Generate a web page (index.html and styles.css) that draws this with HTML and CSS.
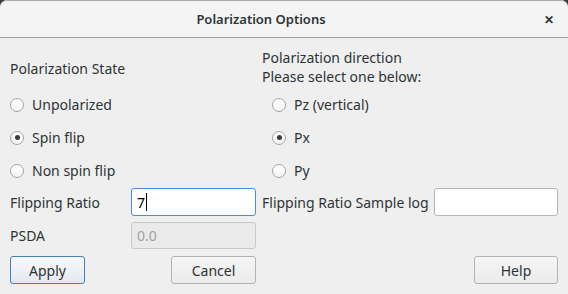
FILE: index.html
```html
<!DOCTYPE html>
<html>
<head>
    <title>Polarization Options</title>
    <link rel="stylesheet" href="styles.css">
</head>
<body>
    <div class="window">
        <div class="titlebar">
            <span class="title">Polarization Options</span>
            <span class="close">&#x2715;</span>
        </div>

        <div class="content">
            <div class="top">
                <div class="col-left">
                    <div class="heading heading-left">Polarization State</div>
                    <label class="radio-row"><span class="radio"></span>Unpolarized</label>
                    <label class="radio-row"><span class="radio checked"></span>Spin flip</label>
                    <label class="radio-row"><span class="radio"></span>Non spin flip</label>
                </div>
                <div class="col-right">
                    <div class="heading heading-right">Polarization direction<br>Please select one below:</div>
                    <label class="radio-row"><span class="radio"></span>Pz (vertical)</label>
                    <label class="radio-row"><span class="radio checked"></span>Px</label>
                    <label class="radio-row"><span class="radio"></span>Py</label>
                </div>
            </div>

            <div class="form">
                <div class="form-row row-ratio">
                    <span class="label">Flipping Ratio</span>
                    <div class="field focused">7<span class="caret"></span></div>
                    <span class="label c3">Flipping Ratio Sample log</span>
                    <div class="field"></div>
                </div>
                <div class="form-row row-psda">
                    <span class="label">PSDA</span>
                    <div class="field disabled">0.0</div>
                </div>
                <div class="form-row row-buttons">
                    <div><button class="btn btn-default apply">Apply</button></div>
                    <div class="right"><button class="btn cancel">Cancel</button></div>
                    <div></div>
                    <div class="right"><button class="btn help">Help</button></div>
                </div>
            </div>
        </div>
    </div>
</body>
</html>
```

FILE: styles.css
```css
html { background: #3c3c3c; }
body { margin: 0; font-family: "Noto Sans", "Open Sans", sans-serif; font-size: 14px; color: #2e3436; }
.window { width: 568px; height: 294px; background: #efefef; border-radius: 7px 7px 0 0; overflow: hidden; }

.titlebar { height: 38px; box-sizing: border-box; padding-right: 46px; background: #f4f4f4; border-top: 1px solid #a9a9a9; border-bottom: 1px solid #9e9e9e; border-radius: 7px 7px 0 0; display: flex; align-items: center; justify-content: center; position: relative; }
.title { font-weight: 600; font-size: 13px; color: #2e3436; }
.close { position: absolute; right: 14px; top: 10px; font-size: 12px; font-weight: bold; color: #2e3436; }

.content { padding: 0 10px; }
.top { display: flex; }
.col-left { width: 252px; }
.col-right { padding-left: 10px; }
.heading { height: 50px; box-sizing: border-box; line-height: 19px; }
.heading-left { padding-top: 21px; }
.heading-right { padding-top: 10px; margin-left: -10px; }

.radio-row { display: flex; align-items: center; height: 33px; }
.radio { width: 12px; height: 12px; border: 1px solid #a4a4a4; border-radius: 50%; background: linear-gradient(#ffffff, #f3f3f3); margin-right: 8px; display: inline-flex; align-items: center; justify-content: center; }
.radio.checked::after { content: ""; width: 5px; height: 5px; border-radius: 50%; background: #3b3b3b; }

.form { margin-top: 1px; }
.form-row { display: grid; grid-template-columns: 121px 125px 178px 124px; align-items: center; }
.c3 { padding-left: 6px; }
.row-ratio { height: 28px; }
.row-psda { height: 27px; margin-top: 6px; }
.row-buttons { height: 28px; margin-top: 7px; }
.right { display: flex; justify-content: flex-end; }

.field { height: 28px; box-sizing: border-box; border: 1px solid #b6b6b3; border-radius: 3px; background: #ffffff; padding: 0 5px; display: flex; align-items: center; }
.field.focused { border-color: #4a90d9; color: #000; }
.caret { width: 1px; height: 18px; background: #000; margin-left: 1px; }
.field.disabled { height: 27px; background: #eaeaea; border-color: #c8c8c8; color: #a0a0a0; }

.btn { font-family: "Noto Sans", "Open Sans", sans-serif; font-size: 14px; color: #2e3436; height: 28px; border: 1px solid #b3b3b0; border-radius: 3px; background: linear-gradient(#f6f6f6, #ebebeb); padding: 0; }
.btn-default { border-color: #4a7fb5; background: linear-gradient(#f8f9fb, #e4e8ee); }
.apply { width: 75px; }
.cancel { width: 85px; }
.help { width: 84px; }
```
